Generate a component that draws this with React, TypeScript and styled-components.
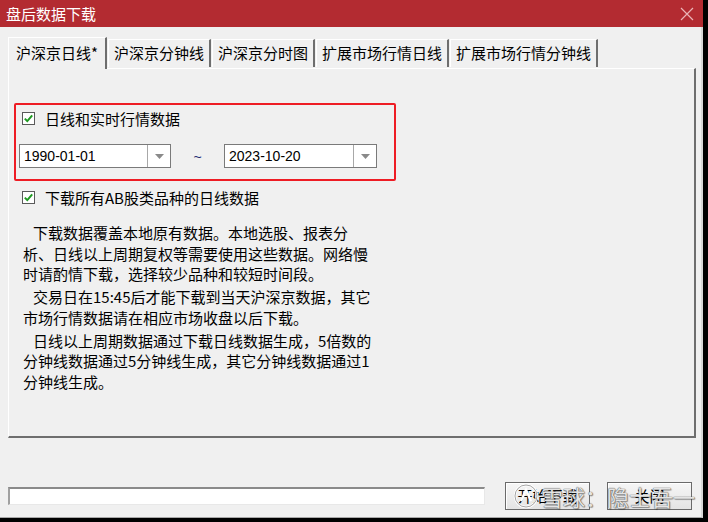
import React from "react";
import styled, { createGlobalStyle } from "styled-components";

const GlobalStyle = createGlobalStyle`
  html, body {
    margin: 0;
    padding: 0;
    background: #000;
  }
  body {
    font-family: "Noto Sans CJK SC", "Noto Sans", sans-serif;
    font-size: 15px;
    color: #000;
  }
`;

const Window = styled.div`
  width: 703px;
  height: 518px;
  background: #f0f0f0;
  display: flex;
  flex-direction: column;
  position: relative;
  overflow: hidden;
`;

const TitleBar = styled.div`
  height: 27px;
  flex: none;
  background: #b32b31;
  display: flex;
  align-items: center;
  justify-content: space-between;
  padding: 0 6px;
  color: #fff;
  font-size: 15px;
  line-height: 27px;
`;

const CloseButton = styled.div`
  width: 16px;
  height: 16px;
  margin-right: 2px;
  display: flex;
  align-items: center;
  justify-content: center;
`;

const Body = styled.div`
  flex: 1;
  display: flex;
  flex-direction: column;
  padding: 10px 0 0 8px;
  border-right: 2px solid #d8d8d8;
  border-bottom: 1px solid #a8a8a8;
`;

const TabRow = styled.div`
  display: flex;
  align-items: flex-end;
  height: 31px;
  position: relative;
  z-index: 1;
`;

const Tab = styled.div<{ $active?: boolean }>`
  box-sizing: border-box;
  height: ${({ $active }) => ($active ? "32px" : "28px")};
  margin: ${({ $active }) => ($active ? "0 0 -1px 0" : "0 0 1px 0")};
  padding: 0 ${({ $active }) => ($active ? "7px" : "5px")} 2px;
  margin-left: ${({ $active }) => ($active ? "0" : "1px")};
  background: #f0f0f0;
  border-top: 1px solid #fff;
  border-left: 1px solid #fff;
  border-right: 2px solid #6e6e6e;
  display: flex;
  align-items: center;
  white-space: nowrap;
  font-size: 15px;
  line-height: 20px;
`;

const Panel = styled.div`
  box-sizing: border-box;
  width: 688px;
  height: 370px;
  border-top: 1px solid #fff;
  border-left: 1px solid #fff;
  border-right: 2px solid #6e6e6e;
  border-bottom: 2px solid #6e6e6e;
  padding: 34px 0 0 5px;
  display: flex;
  flex-direction: column;
`;

const RedBox = styled.div`
  box-sizing: border-box;
  width: 382px;
  height: 78px;
  border: 2px solid #ee1c24;
  border-radius: 2px;
  padding: 3px 0 0 6px;
  display: flex;
  flex-direction: column;
`;

const CheckRow = styled.label<{ $indent?: number; $top?: number }>`
  display: flex;
  align-items: center;
  height: 21px;
  gap: 10px;
  padding-left: ${({ $indent }) => $indent ?? 0}px;
  margin-top: ${({ $top }) => $top ?? 0}px;
  font-size: 15px;
  white-space: nowrap;
`;

const Box = styled.span`
  box-sizing: border-box;
  width: 13px;
  height: 13px;
  background: #fff;
  border: 1px solid #5a5a5a;
  display: flex;
  align-items: center;
  justify-content: center;
  flex: none;
`;

const ComboRow = styled.div`
  display: flex;
  align-items: center;
  margin-top: 15px;
  margin-left: -3px;
`;

const Combo = styled.div<{ $w: number }>`
  box-sizing: border-box;
  width: ${({ $w }) => $w}px;
  height: 24px;
  background: #fff;
  border: 1px solid #7a7a7a;
  display: flex;
  align-items: stretch;
`;

const ComboText = styled.div`
  flex: 1;
  padding-left: 4px;
  font-family: "Liberation Sans", Arial, sans-serif;
  font-size: 14px;
  line-height: 22px;
`;

const ComboArrow = styled.div`
  width: 22px;
  border-left: 1px solid #a8a8a8;
  display: flex;
  align-items: center;
  justify-content: center;
`;

const Tilde = styled.div`
  width: 53px;
  text-align: center;
  font-family: "Liberation Sans", Arial, sans-serif;
  font-size: 14px;
  color: #1a2a70;
  padding-top: 2px;
`;

const Notes = styled.div`
  margin: 15px 0 0 9px;
  font-size: 15px;
  line-height: 20.7px;
  color: #000;
`;

const Para = styled.p`
  margin: 0 0 2px 0;
  padding-left: 10px;
  white-space: nowrap;
`;

const Line = styled.span<{ $first?: boolean }>`
  display: block;
  margin-left: ${({ $first }) => ($first ? "0" : "-10px")};
`;

const Footer = styled.div`
  display: flex;
  align-items: center;
  margin-top: 44px;
  height: 27px;
`;

const Progress = styled.div`
  box-sizing: border-box;
  width: 477px;
  height: 18px;
  background: #fff;
  border-top: 2px solid #8a8a8a;
  border-left: 2px solid #a0a0a0;
  border-right: 1px solid #e8e8e8;
  border-bottom: 1px solid #e8e8e8;
  margin-top: 1px;
`;

const Button = styled.button<{ $gap: number }>`
  box-sizing: border-box;
  width: 85px;
  height: 28px;
  margin-left: ${({ $gap }) => $gap}px;
  border: 1px solid #6a6a6a;
  background: linear-gradient(#f6f6f6, #e4e4e4);
  box-shadow: inset 1px 1px 0 #fff;
  font-family: "Noto Sans CJK SC", sans-serif;
  font-size: 15px;
  color: #000;
  padding: 0;
`;

const Watermark = styled.div`
  position: absolute;
  left: 513px;
  top: 481px;
  display: flex;
  align-items: center;
  gap: 2px;
  font-size: 22px;
  line-height: 30px;
  color: rgba(255, 255, 255, 0.85);
  text-shadow: 0 0 1px #555, 0 0 1px #555, 1px 1px 1px rgba(0, 0, 0, 0.35);
  pointer-events: none;
  white-space: nowrap;
`;

const Check = () => (
  <svg width="11" height="11" viewBox="0 0 11 11">
    <path d="M1.8 5.6 L4.3 8.1 L9.2 2.4" fill="none" stroke="#1f9a22" strokeWidth="2" />
  </svg>
);

const Arrow = () => (
  <svg width="9" height="5" viewBox="0 0 9 5">
    <path d="M0 0 H9 L4.5 5 Z" fill="#8a8a8a" />
  </svg>
);

const tabs = ["沪深京日线*", "沪深京分钟线", "沪深京分时图", "扩展市场行情日线", "扩展市场行情分钟线"];

const notes = [
  ["下载数据覆盖本地原有数据。本地选股、报表分", "析、日线以上周期复权等需要使用这些数据。网络慢", "时请酌情下载，选择较少品种和较短时间段。"],
  ["交易日在15:45后才能下载到当天沪深京数据，其它", "市场行情数据请在相应市场收盘以后下载。"],
  ["日线以上周期数据通过下载日线数据生成，5倍数的", "分钟线数据通过5分钟线生成，其它分钟线数据通过1", "分钟线生成。"],
];

export default function App() {
  return (
    <>
      <GlobalStyle />
      <Window>
        <TitleBar>
          <span>盘后数据下载</span>
          <CloseButton>
            <svg width="14" height="14" viewBox="0 0 14 14">
              <path d="M1 1 L13 13 M13 1 L1 13" stroke="#eab3b5" strokeWidth="1.2" />
            </svg>
          </CloseButton>
        </TitleBar>
        <Body>
          <TabRow>
            {tabs.map((t, i) => (
              <Tab key={t} $active={i === 0}>
                {t}
              </Tab>
            ))}
          </TabRow>
          <Panel>
            <RedBox>
              <CheckRow>
                <Box>
                  <Check />
                </Box>
                日线和实时行情数据
              </CheckRow>
              <ComboRow>
                <Combo $w={152}>
                  <ComboText>1990-01-01</ComboText>
                  <ComboArrow>
                    <Arrow />
                  </ComboArrow>
                </Combo>
                <Tilde>~</Tilde>
                <Combo $w={153}>
                  <ComboText>2023-10-20</ComboText>
                  <ComboArrow>
                    <Arrow />
                  </ComboArrow>
                </Combo>
              </ComboRow>
            </RedBox>
            <CheckRow $indent={8} $top={6}>
              <Box>
                <Check />
              </Box>
              下载所有AB股类品种的日线数据
            </CheckRow>
            <Notes>
              {notes.map((p, i) => (
                <Para key={i}>
                  {p.map((l, j) => (
                    <Line key={j} $first={j === 0}>
                      {l}
                    </Line>
                  ))}
                </Para>
              ))}
            </Notes>
          </Panel>
          <Footer>
            <Progress />
            <Button $gap={20}>开始下载</Button>
            <Button $gap={17}>关闭</Button>
          </Footer>
        </Body>
        <Watermark>
          <svg width="26" height="26" viewBox="0 0 26 26">
            <circle cx="13" cy="13" r="11" fill="none" stroke="#fff" strokeWidth="2.4" />
            <circle cx="13" cy="13" r="11" fill="none" stroke="#666" strokeWidth="0.6" />
            <path d="M8 18 L13 7 L18 18" fill="none" stroke="#fff" strokeWidth="2.4" />
          </svg>
          <span>雪球：隐士吾一</span>
        </Watermark>
      </Window>
    </>
  );
}
